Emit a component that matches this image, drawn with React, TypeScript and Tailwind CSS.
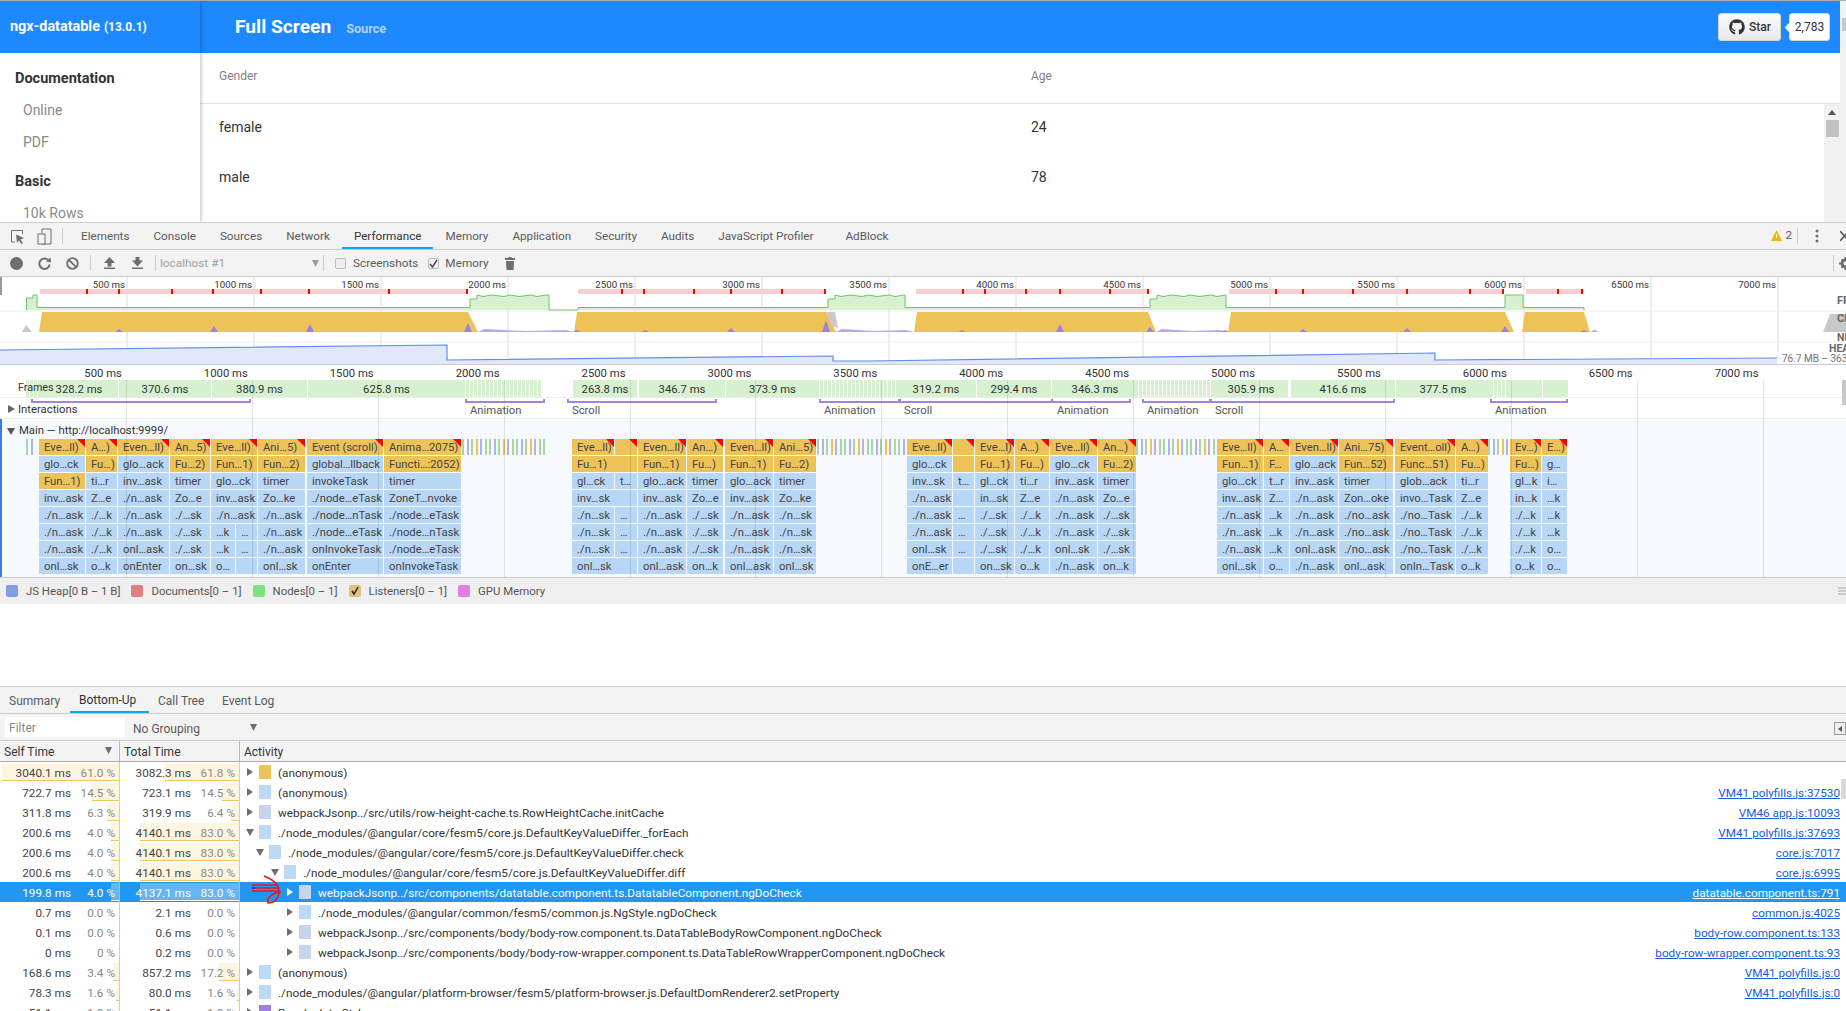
import { FaGithub } from 'react-icons/fa'

const TICKS = [1, 2, 3, 4, 5, 6, 7, 8, 9, 10, 11, 12, 13, 14]

const RED_SEGS = [[40, 468], [578, 825], [916, 1148], [1229, 1504], [1526, 1584]]
const RED_TICKS = [87, 119, 172, 213, 261, 309, 389, 467, 622, 644, 694, 731, 782, 825, 963, 985, 1026, 1060, 1110, 1148, 1276, 1303, 1353, 1407, 1470, 1503, 1558, 1582]
const CPU_SEGS = [[39, 468, 478], [574, 826, 836], [914, 1148, 1156], [1228, 1505, 1514], [1522, 1584, 1590]]
const SPIKES = [[119, 3], [214, 6], [310, 8], [468, 9], [577, 2], [645, 2], [731, 4], [826, 12], [962, 2], [1061, 2], [1060, 8], [1150, 5], [1225, 2], [1303, 3], [1407, 4], [1505, 6], [1584, 2]]
const NOISE = [[478, 574], [836, 914], [1156, 1228], [1590, 1600]]

// jagged top of the fps chart while the page is animating
function fpsTop(x1: number, x2: number) {
  let d = `L${x1} 299 L${x1 + 7} 299 L${x1 + 7} 295`
  let x = x1 + 7
  let i = 0
  while (x < x2 - 6) {
    x += 6 + (i % 3) * 3
    d += ` L${x} ${i % 2 ? 295 : 296.5}`
    i++
  }
  return d + ` L${x2} 295 L${x2} 307.5`
}

const fpsPath =
  'M26.5 310 L26.5 298 L33 298 L33 295 L37 295 L37 307.5 L470 307.5 ' +
  fpsTop(470, 549) + ' L549 310 L578 310 L578 307.5 L828 307.5 ' +
  fpsTop(828, 905) + ' L1150 307.5 ' +
  fpsTop(1150, 1226) + ' L1505 307.5 L1505 295 L1523 295 L1523 307.5 L1584 307.5 L1584 310'

function Overview() {
  return (
    <div className="h-[88px] overflow-hidden border-b border-[#ccc]">
      <svg className="block h-[87px] w-[1846px] font-[Roboto,sans-serif]" viewBox="0 0 1846 87">
        <g transform="translate(0,-277)">
          <rect x="0" y="277" width="2" height="18" fill="#999" />
          {TICKS.map((n) => (
            <g key={n}>
              <line x1={127 * n} x2={127 * n} y1="277" y2="365" stroke="#dcdcdc" />
              <text x={127 * n - 2} y="288" textAnchor="end" fontSize="9.7" fill="#333">{n * 500} ms</text>
            </g>
          ))}
          <line x1="0" x2="1846" y1="311" y2="311" stroke="#eee" />
          <line x1="0" x2="1846" y1="342" y2="342" stroke="#eee" />
          {RED_SEGS.map(([a, b]) => (
            <rect key={a} x={a} y="289" width={b - a} height="5" fill="#f8cfcf" />
          ))}
          {RED_TICKS.map((x) => (
            <rect key={x} x={x - 1} y="289" width="2" height="5" fill="#f00" />
          ))}
          <path d={fpsPath} fill="#d6f0d0" stroke="#6cc56a" strokeWidth="1" />
          <polygon points="22,332 26,325 32,332" fill="#c8c8c8" />
          {NOISE.map(([a, b]) => (
            <polygon key={a} points={`${a},332 ${a + 6},329 ${(a + b) / 2},331 ${b - 8},330 ${b},332`} fill="#b9a9e6" />
          ))}
          {CPU_SEGS.map(([a, b, c]) => (
            <polygon key={a} points={`${a},332 ${a + 3},312 ${b},312 ${c},332`} fill="#edc358" />
          ))}
          <polygon points="826,312 835,312 838,328 832,326" fill="#c9c9c9" />
          {SPIKES.map(([x, h]) => (
            <polygon key={`${x}-${h}`} points={`${x - 4},332 ${x},${332 - h} ${x + 4},332`} fill="#9b82e0" />
          ))}
          <polygon points="1823,332 1827,322 1830,314 1846,314 1846,332" fill="#c8c8c8" />
          <path d="M0 350 L447 345 L447 360 L833 356 L833 361 L870 361 L1435 353 L1435 360 L1777 358 L1846 358 L1846 365 L0 365 Z" fill="#e1e8fb" />
          <path d="M0 350 L447 345 L447 360 L833 356 L833 361 L870 361 L1435 353 L1435 360 L1777 358 L1846 358" fill="none" stroke="#5f8ee8" strokeWidth="1.2" />
          <rect x="1777" y="352" width="69" height="13" fill="#fff" fillOpacity="0.8" />
          <text x="1837" y="304" fontSize="11" fontWeight="700" fill="#666">FPS</text>
          <text x="1837" y="322" fontSize="11" fontWeight="700" fill="#666">CPU</text>
          <text x="1837" y="341" fontSize="10.5" fontWeight="700" fill="#666">NET</text>
          <text x="1829" y="352" fontSize="10.5" fontWeight="700" fill="#666">HEAP</text>
          <text x="1782" y="362" fontSize="10" fill="#777">76.7 MB – 363 M</text>
        </g>
      </svg>
    </div>
  )
}

const FRAMES: [number, number, string][] = [
  [40, 118, '328.2 ms'], [119, 211, '370.6 ms'], [212, 307, '380.9 ms'], [308, 465, '625.8 ms'],
  [573, 637, '263.8 ms'], [639, 725, '346.7 ms'], [726, 819, '373.9 ms'], [896, 976, '319.2 ms'],
  [977, 1051, '299.4 ms'], [1052, 1138, '346.3 ms'], [1214, 1288, '305.9 ms'], [1291, 1395, '416.6 ms'],
  [1396, 1490, '377.5 ms'], [1509, 1542, ''], [1543, 1568, ''],
]
const FRAME_STRIPES = [[26, 40], [466, 542], [820, 895], [1139, 1213], [1490, 1508]]

const BRACKETS: [number, number, string, number][] = [
  [31, 251, '', 0], [465, 545, 'Animation', 470], [567, 717, 'Scroll', 572], [819, 900, 'Animation', 824],
  [899, 1053, 'Scroll', 904], [1051, 1131, 'Animation', 1057], [1142, 1212, 'Animation', 1147],
  [1209, 1395, 'Scroll', 1215], [1490, 1568, 'Animation', 1495],
]

type Block = { x: number; w: number; row: number; label: string; yellow: boolean }

const flame: Block[] = []
function col(x1: number, x2: number, ys: number[], labels: (string | null)[]) {
  labels.forEach((label, row) => {
    if (label === null) return
    flame.push({ x: x1, w: x2 - x1, row, label, yellow: ys.includes(row) })
  })
}

const N = null
// first burst
col(39, 85, [0, 2], ['Eve…ll)', 'glo…ck', 'Fun…1)', 'inv…ask', './n…ask', './n…ask', './n…ask', 'onl…sk'])
col(86, 117, [0, 1], ['A…)', 'Fu…)', 'ti…r', 'Z…e', './…k', './…k', './…k', 'o…k'])
col(118, 169, [0], ['Even…ll)', 'glo…ack', 'inv…ask', './n…ask', './n…ask', './n…ask', 'onl…ask', 'onEnter'])
col(170, 210, [0, 1], ['An…5)', 'Fu…2)', 'timer', 'Zo…e', './…sk', './…sk', './…sk', 'on…sk'])
col(211, 257, [0, 1], ['Eve…ll)', 'Fun…1)', 'glo…ck', 'inv…ask', './n…ask', N, N, N])
col(211, 235, [], [N, N, N, N, N, '…k', '…k', 'o…'])
col(236, 257, [], [N, N, N, N, N, '…', '…', ''])
col(258, 305, [0, 1], ['Ani…5)', 'Fun…2)', 'timer', 'Zo…ke', './n…ask', './n…ask', './n…ask', 'onl…sk'])
col(307, 383, [0], ['Event (scroll)', 'global…llback', 'invokeTask', './node…eTask', './node…nTask', './node…eTask', 'onInvokeTask', 'onEnter'])
col(384, 461, [0, 1], ['Anima…2075)', 'Functi…:2052)', 'timer', 'ZoneT…nvoke', './node…eTask', './node…nTask', './node…eTask', 'onInvokeTask'])
// second burst
col(572, 614, [0], ['Eve…ll)', N, 'gl…ck', N, './n…sk', './n…sk', './n…sk', N])
col(615, 637, [0], ['', N, 't…', N, '…', '…', '…', N])
col(572, 637, [1], [N, 'Fu…1)', N, 'inv…sk', N, N, N, 'onl…sk'])
col(638, 686, [0, 1], ['Even…ll)', 'Fun…1)', 'glo…ack', 'inv…ask', './n…ask', './n…ask', './n…ask', 'onl…ask'])
col(687, 723, [0, 1], ['An…)', 'Fu…)', 'timer', 'Zo…e', './…sk', './…sk', './…sk', 'on…k'])
col(725, 773, [0, 1], ['Even…ll)', 'Fun…1)', 'glo…ack', 'inv…ask', './n…ask', './n…ask', './n…ask', 'onl…ask'])
col(774, 816, [0, 1], ['Ani…5)', 'Fu…2)', 'timer', 'Zo…ke', './n…sk', './n…sk', './n…sk', 'onl…sk'])
// third burst
col(907, 952, [0], ['Eve…ll)', 'glo…ck', 'inv…sk', './n…ask', './n…ask', './n…ask', 'onl…sk', 'onE…er'])
col(953, 974, [0, 1], ['', '', 't…', '', '…', '…', '…', ''])
col(975, 1014, [0, 1], ['Eve…l)', 'Fu…1)', 'gl…ck', 'in…sk', './…sk', './…sk', './…sk', 'on…sk'])
col(1015, 1049, [0, 1], ['A…)', 'Fu…)', 'ti…r', 'Z…e', './…k', './…k', './…k', 'o…k'])
col(1050, 1097, [0], ['Eve…ll)', 'glo…ck', 'inv…ask', './n…ask', './n…ask', './n…ask', 'onl…sk', './n…ask'])
col(1098, 1136, [0, 1], ['An…)', 'Fu…2)', 'timer', 'Zo…e', './…sk', './…sk', './…sk', 'on…k'])
// fourth burst
col(1217, 1263, [0, 1], ['Eve…ll)', 'Fun…1)', 'glo…ck', 'inv…ask', './n…ask', './n…ask', './n…ask', 'onl…sk'])
col(1264, 1289, [0, 1], ['A…', 'F…', 't…r', 'Z…', '…k', '…k', '…k', 'o…'])
col(1290, 1338, [0], ['Even…ll)', 'glo…ack', 'inv…ask', './n…ask', './n…ask', './n…ask', 'onl…ask', './n…ask'])
col(1339, 1393, [0, 1], ['Ani…75)', 'Fun…52)', 'timer', 'Zon…oke', './no…ask', './no…ask', './no…ask', 'onl…ask'])
col(1395, 1455, [0, 1], ['Event…oll)', 'Func…51)', 'glob…ack', 'invo…Task', './no…Task', './no…Task', './no…Task', 'onIn…Task'])
col(1456, 1488, [0, 1], ['A…)', 'Fu…)', 'ti…r', 'Z…e', './…k', './…k', './…k', 'o…k'])
col(1510, 1541, [0, 1], ['Ev…)', 'Fu…)', 'gl…k', 'in…k', './…k', './…k', './…k', 'o…k'])
col(1542, 1567, [0], ['E…)', 'g…', 'i…', '…k', '…k', '…k', 'o…', 'o…'])

const STRIPE_COLORS = ['#a9d6a4', '#b3b3e3', '#a9d6a4', '#edc358', '#b3b3e3', '#a9d6a4']
const STRIPE_RANGES = [[26, 34], [462, 545], [817, 905], [1136, 1215], [1488, 1508]]
const stripes: { x: number; c: string }[] = []
STRIPE_RANGES.forEach(([a, b]) => {
  let i = 0
  for (let x = a; x < b; x += 4 + (i % 2)) {
    stripes.push({ x, c: STRIPE_COLORS[i % STRIPE_COLORS.length] })
    i++
  }
})

function Timeline() {
  return (
    <div className="relative h-[212px] overflow-hidden bg-white text-[11.3px]">
      {/* ruler */}
      <div className="relative h-[15px] text-[#333]">
        {TICKS.map((n) => (
          <span key={n} className="absolute top-0 leading-[17px] whitespace-nowrap" style={{ right: 1846 - 125.9 * n + 4 }}>
            {n * 500} ms
          </span>
        ))}
      </div>

      {/* frames */}
      <div className="relative h-[17px]">
        {FRAME_STRIPES.flatMap(([a, b]) => {
          const out = []
          for (let x = a; x < b; x += 4) out.push(x)
          return out
        }).map((x) => (
          <div key={x} className="absolute top-0 h-[17px] w-[3px] bg-[#d6f0d0]" style={{ left: x }} />
        ))}
        {FRAMES.map(([a, b, label]) => (
          <div
            key={a}
            className="absolute top-0 h-[17px] bg-[#d6f0d0] text-center leading-[19px] text-[#333]"
            style={{ left: a, width: b - a }}
          >
            {label}
          </div>
        ))}
        <span className="absolute left-[18px] top-0 text-[10.7px] leading-[16px] text-[#333]">Frames</span>
      </div>

      {/* interactions */}
      <div className="relative h-[22px] border-y border-[#eee]">
        {BRACKETS.map(([a, b, label, lx]) => (
          <div key={a}>
            <div
              className="absolute top-[1px] h-[4px] border-x-2 border-b-2 border-[#9f84e3]"
              style={{ left: a, width: b - a }}
            />
            {label && (
              <span className="absolute top-[5px] leading-[15px] text-[#555]" style={{ left: lx }}>
                {label}
              </span>
            )}
          </div>
        ))}
        <svg className="absolute left-[8px] top-[7px] w-[7px] h-[8px]" viewBox="0 0 7 8">
          <path d="M0 0 L7 4 L0 8 Z" fill="#666" />
        </svg>
        <span className="absolute left-[18px] top-[4px] leading-[15px] text-[#333]">Interactions</span>
      </div>

      {/* main thread */}
      <div className="relative h-[158px] bg-[#f6f9fd] border-l-2 border-[#3b7bdc]">
        <div className="flex h-[20px] items-center gap-[4px] pl-[5px] pt-[4px] text-[#333]">
          <svg className="w-[8px] h-[7px]" viewBox="0 0 8 7">
            <path d="M0 0 L8 0 L4 7 Z" fill="#555" />
          </svg>
          <span>Main — http://localhost:9999/</span>
        </div>
        <div className="relative -ml-[2px] h-[138px]">
          {stripes.map((s) => (
            <div key={s.x} className="absolute top-0 h-[16px] w-[2px]" style={{ left: s.x, backgroundColor: s.c }} />
          ))}
          {flame.map((b, i) => (
            <div
              key={i}
              className={`absolute h-[16px] overflow-hidden whitespace-nowrap pl-[5px] leading-[17px] text-[#444] ${b.yellow ? 'bg-[#edc358]' : 'bg-[#b8d6f5]'}`}
              style={{ left: b.x, width: b.w, top: b.row * 17 }}
            >
              {b.label}
              {b.row === 0 && (
                <div className="absolute right-0 top-0 h-0 w-0 border-l-[8px] border-t-[8px] border-l-transparent border-t-[#f00]" />
              )}
            </div>
          ))}
        </div>
      </div>

      {/* grid lines over everything */}
      {TICKS.map((n) => (
        <div
          key={n}
          className="pointer-events-none absolute top-[15px] bottom-0 w-px bg-black/10"
          style={{ left: 125.9 * n }}
        />
      ))}
      <div className="absolute right-0 top-[15px] h-[25px] w-[4px] bg-[#c8c8c8]" />
    </div>
  )
}

const LEGEND: [string, string, boolean][] = [
  ['JS Heap[0 B – 1 B]', 'bg-[#7f9fe0]', false],
  ['Documents[0 – 1]', 'bg-[#e07f7f]', false],
  ['Nodes[0 – 1]', 'bg-[#7fe07f]', false],
  ['Listeners[0 – 1]', 'bg-[#e0bf7f]', true],
  ['GPU Memory', 'bg-[#df7fdf]', false],
]

type Row = {
  self: string
  selfPct: string
  selfW: number
  total: string
  totalPct: string
  totalW: number
  depth: number
  open?: boolean
  selected?: boolean
  icon: string
  name: string
  link?: string
}

const YELLOW = 'bg-[#edc358]'
const BLUE = 'bg-[#bcd9f5]'
const LAV = 'bg-[#c8d4ec]'

const ROWS: Row[] = [
  { self: '3040.1 ms', selfPct: '61.0 %', selfW: 117, total: '3082.3 ms', totalPct: '61.8 %', totalW: 74, depth: 0, icon: YELLOW, name: '(anonymous)' },
  { self: '722.7 ms', selfPct: '14.5 %', selfW: 27, total: '723.1 ms', totalPct: '14.5 %', totalW: 17, depth: 0, icon: BLUE, name: '(anonymous)', link: 'VM41 polyfills.js:37530' },
  { self: '311.8 ms', selfPct: '6.3 %', selfW: 12, total: '319.9 ms', totalPct: '6.4 %', totalW: 8, depth: 0, icon: LAV, name: 'webpackJsonp../src/utils/row-height-cache.ts.RowHeightCache.initCache', link: 'VM46 app.js:10093' },
  { self: '200.6 ms', selfPct: '4.0 %', selfW: 8, total: '4140.1 ms', totalPct: '83.0 %', totalW: 99, depth: 0, open: true, icon: BLUE, name: './node_modules/@angular/core/fesm5/core.js.DefaultKeyValueDiffer._forEach', link: 'VM41 polyfills.js:37693' },
  { self: '200.6 ms', selfPct: '4.0 %', selfW: 8, total: '4140.1 ms', totalPct: '83.0 %', totalW: 99, depth: 1, open: true, icon: BLUE, name: './node_modules/@angular/core/fesm5/core.js.DefaultKeyValueDiffer.check', link: 'core.js:7017' },
  { self: '200.6 ms', selfPct: '4.0 %', selfW: 8, total: '4140.1 ms', totalPct: '83.0 %', totalW: 99, depth: 2, open: true, icon: BLUE, name: './node_modules/@angular/core/fesm5/core.js.DefaultKeyValueDiffer.diff', link: 'core.js:6995' },
  { self: '199.8 ms', selfPct: '4.0 %', selfW: 8, total: '4137.1 ms', totalPct: '83.0 %', totalW: 99, depth: 3, selected: true, icon: LAV, name: 'webpackJsonp../src/components/datatable.component.ts.DatatableComponent.ngDoCheck', link: 'datatable.component.ts:791' },
  { self: '0.7 ms', selfPct: '0.0 %', selfW: 0, total: '2.1 ms', totalPct: '0.0 %', totalW: 0, depth: 3, icon: BLUE, name: './node_modules/@angular/common/fesm5/common.js.NgStyle.ngDoCheck', link: 'common.js:4025' },
  { self: '0.1 ms', selfPct: '0.0 %', selfW: 0, total: '0.6 ms', totalPct: '0.0 %', totalW: 0, depth: 3, icon: LAV, name: 'webpackJsonp../src/components/body/body-row.component.ts.DataTableBodyRowComponent.ngDoCheck', link: 'body-row.component.ts:133' },
  { self: '0 ms', selfPct: '0 %', selfW: 0, total: '0.2 ms', totalPct: '0.0 %', totalW: 0, depth: 3, icon: LAV, name: 'webpackJsonp../src/components/body/body-row-wrapper.component.ts.DataTableRowWrapperComponent.ngDoCheck', link: 'body-row-wrapper.component.ts:93' },
  { self: '168.6 ms', selfPct: '3.4 %', selfW: 6, total: '857.2 ms', totalPct: '17.2 %', totalW: 20, depth: 0, icon: BLUE, name: '(anonymous)', link: 'VM41 polyfills.js:0' },
  { self: '78.3 ms', selfPct: '1.6 %', selfW: 3, total: '80.0 ms', totalPct: '1.6 %', totalW: 2, depth: 0, icon: BLUE, name: './node_modules/@angular/platform-browser/fesm5/platform-browser.js.DefaultDomRenderer2.setProperty', link: 'VM41 polyfills.js:0' },
  { self: '51.1 ms', selfPct: '1.0 %', selfW: 2, total: '51.1 ms', totalPct: '1.0 %', totalW: 1, depth: 0, icon: 'bg-[#9b82e0]', name: 'Recalculate Style' },
]

const DEPTH_PAD = ['pl-[6px]', 'pl-[16px]', 'pl-[31px]', 'pl-[46px]']

function TimeCell({ time, pct, width, selected, border }: { time: string; pct: string; width: number; selected?: boolean; border: string }) {
  return (
    <div className={`relative h-full w-[120px] shrink-0 border-r ${border}`}>
      {width > 0 && (
        <div
          className={`absolute right-0 top-px bottom-px border-b ${selected ? 'bg-white/30 border-white' : 'bg-[#fdf5df] border-[#efc75e]'}`}
          style={{ width }}
        />
      )}
      <span className={`absolute right-[48px] top-0 leading-[23px] ${selected ? 'text-white' : 'text-[#444]'}`}>{time}</span>
      <span className={`absolute right-[4px] top-0 leading-[23px] ${selected ? 'text-white' : 'text-[#888]'}`}>{pct}</span>
    </div>
  )
}

function ProfileRow({ row }: { row: Row }) {
  const sel = row.selected
  return (
    <div className={`flex h-[20px] items-stretch whitespace-nowrap text-[11.75px] ${sel ? 'bg-[#2196f3]' : ''}`}>
      <TimeCell time={row.self} pct={row.selfPct} width={row.selfW} selected={sel} border={sel ? 'border-[#8ec8f8]' : 'border-[#ccc]'} />
      <TimeCell time={row.total} pct={row.totalPct} width={row.totalW} selected={sel} border={sel ? 'border-[#8ec8f8]' : 'border-[#ccc]'} />
      <div className={`flex min-w-0 flex-1 items-center pr-[6px] ${DEPTH_PAD[row.depth]}`}>
        {row.open ? (
          <svg className="mr-[5px] w-[8px] h-[8px] shrink-0" viewBox="0 0 8 8">
            <path d="M0 1 L8 1 L4 8 Z" fill="#6e6e6e" />
          </svg>
        ) : (
          <svg className="mr-[5px] w-[8px] h-[8px] shrink-0" viewBox="0 0 8 8">
            <path d="M1 0 L7 4 L1 8 Z" fill={sel ? '#fff' : '#6e6e6e'} />
          </svg>
        )}
        <span className={`h-[14px] w-[12px] shrink-0 ${row.icon}`} />
        <span className={`ml-[7px] flex-1 overflow-hidden pt-[3px] ${sel ? 'text-white' : 'text-[#333]'}`}>{row.name}</span>
        {row.link && <span className={`pt-[3px] underline ${sel ? 'text-white' : 'text-[#1a5bdb]'}`}>{row.link}</span>}
      </div>
    </div>
  )
}

const MAIN_TABS = ['Elements', 'Console', 'Sources', 'Network', 'Performance', 'Memory', 'Application', 'Security', 'Audits', 'JavaScript Profiler']

export default function App() {
  return (
    <div className="relative h-[1011px] w-[1846px] overflow-hidden bg-white font-[Roboto,sans-serif] text-[12px] text-[#333]">
      {/* demo page */}
      <div className="flex h-[222px] overflow-hidden border-t border-[#aaa]">
        <aside className="z-10 w-[200px] shrink-0 bg-white shadow-[1px_0_4px_rgba(0,0,0,0.25)]">
          <div className="flex h-[52px] items-center bg-[#1e88ff] pl-[10px] font-bold text-white">
            <span className="text-[14.4px]">ngx-datatable</span>
            <span className="ml-[4px] text-[12px]">(13.0.1)</span>
          </div>
          <div className="pl-[15px] pt-[16px]">
            <h4 className="text-[14.5px] font-bold leading-[20px] text-[#333]">Documentation</h4>
            <p className="mt-[11px] pl-[8px] text-[14px] leading-[20px] text-[#8a8a8a]">Online</p>
            <p className="mt-[12px] pl-[8px] text-[14px] leading-[20px] text-[#8a8a8a]">PDF</p>
            <h4 className="mt-[20px] text-[14.5px] font-bold leading-[20px] text-[#333]">Basic</h4>
            <p className="mt-[11px] pl-[8px] text-[14px] leading-[20px] text-[#8a8a8a]">10k Rows</p>
          </div>
        </aside>
        <main className="flex min-w-0 flex-1 flex-col">
          <header className="flex h-[52px] items-center bg-[#1e88ff] pl-[35px] pr-[10px]">
            <h1 className="text-[19.2px] font-bold text-white">Full Screen</h1>
            <span className="ml-[15px] mt-[3px] text-[12.7px] font-bold text-[#b4d4f5]">Source</span>
            <div className="ml-auto flex items-center">
              <div className="flex h-[28px] w-[63px] items-center gap-[4px] rounded-[3px] border border-[#d5d5d5] bg-gradient-to-b from-[#fcfcfc] to-[#e6e8ea] pl-[10px] text-[12px] font-medium text-[#333]">
                <FaGithub className="h-[16px] w-[16px]" />
                Star
              </div>
              <div className="relative ml-[8px] flex h-[28px] w-[41px] items-center justify-center rounded-[3px] border border-[#d5d5d5] bg-white text-[12px] text-[#333]">
                <span className="absolute -left-[4px] top-[10px] h-[7px] w-[7px] rotate-45 bg-white" />
                2,783
              </div>
            </div>
          </header>
          <div className="flex h-[51px] shrink-0 border-b border-[#e3e3e3] text-[12px] text-[#808080]">
            <div className="w-[831px] pl-[19px] pt-[14px]">Gender</div>
            <div className="pt-[14px]">Age</div>
          </div>
          <div className="-mt-[2px] flex min-h-0 flex-1">
            <div className="flex-1 text-[14px] text-[#333]">
              <div className="flex h-[50px] items-center">
                <div className="w-[831px] pl-[19px]">female</div>
                <div>24</div>
              </div>
              <div className="flex h-[50px] items-center">
                <div className="w-[831px] pl-[19px]">male</div>
                <div>78</div>
              </div>
            </div>
            <div className="mt-[2px] flex w-[16px] flex-col items-center bg-[#f1f1f1] pt-[6px]">
              <svg className="w-[8px] h-[5px]" viewBox="0 0 8 5">
                <path d="M0 5 L4 0 L8 5 Z" fill="#505050" />
              </svg>
              <div className="mt-[5px] h-[17px] w-[13px] bg-[#c1c1c1]" />
            </div>
          </div>
        </main>
        <div className="w-[6px] shrink-0 bg-[#f1f1f1] pt-[17px]">
          <div className="ml-[2px] h-[13px] w-[4px] bg-[#c8c8c8]" />
        </div>
      </div>

      {/* devtools tabs */}
      <div className="flex h-[28px] items-center border-y border-[#ccc] bg-[#f3f3f3] pl-[10px] text-[11.7px] text-[#5a5a5a]">
        <svg className="w-[15px] h-[15px] shrink-0" viewBox="0 0 15 15">
          <path d="M5 13 H1.5 V1.5 H12.5 V5" fill="none" stroke="#6e6e6e" strokeWidth="1" />
          <path d="M6 5.5 L14 9 L10.5 10.5 L13 14 L11.5 15 L9 11.5 L7 14 Z" fill="#6e6e6e" />
        </svg>
        <svg className="ml-[12px] w-[15px] h-[17px] shrink-0" viewBox="0 0 15 17">
          <path d="M5 5 V1 H14 V16 H5" fill="none" stroke="#6e6e6e" />
          <rect x="1" y="6" width="7" height="10" fill="#f3f3f3" stroke="#6e6e6e" />
        </svg>
        <div className="ml-[10px] h-[16px] w-px bg-[#ccc]" />
        <nav className="ml-[6px] flex h-full items-stretch">
          {MAIN_TABS.map((t) => (
            <span
              key={t}
              className={`flex items-center border-b-2 px-[12px] pt-[3px] ${t === 'Performance' ? 'border-[#03a9f4] text-[#333]' : 'border-transparent'}`}
            >
              {t}
            </span>
          ))}
          <span className="ml-[8px] flex items-center border-b-2 border-transparent px-[12px] pt-[3px]">AdBlock</span>
        </nav>
        <div className="ml-auto flex items-center">
          <svg className="w-[11px] h-[11px]" viewBox="0 0 11 11">
            <path d="M5.5 0 L11 11 H0 Z" fill="#f4b400" />
            <rect x="5" y="4" width="1" height="4" fill="#fff" />
          </svg>
          <span className="ml-[3px]">2</span>
          <div className="ml-[5px] h-[16px] w-px bg-[#ccc]" />
          <svg className="ml-[17px] w-[4px] h-[14px]" viewBox="0 0 4 14">
            <circle cx="2" cy="2" r="1.5" fill="#6e6e6e" />
            <circle cx="2" cy="7" r="1.5" fill="#6e6e6e" />
            <circle cx="2" cy="12" r="1.5" fill="#6e6e6e" />
          </svg>
          <svg className="ml-[21px] w-[9px] h-[10px] mr-[-3px]" viewBox="0 0 9 10">
            <path d="M0 0 L9 10 M9 0 L0 10" stroke="#555" strokeWidth="1.6" />
          </svg>
        </div>
      </div>

      {/* performance toolbar */}
      <div className="flex h-[27px] items-center border-b border-[#ccc] bg-[#f3f3f3] pl-[10px] text-[11.8px] text-[#5a5a5a]">
        <div className="h-[13px] w-[13px] rounded-full bg-[#6e6e6e]" />
        <svg className="ml-[15px] w-[13px] h-[13px]" viewBox="0 0 13 13">
          <path d="M11 4 A5.2 5.2 0 1 0 11.7 7.5" fill="none" stroke="#6e6e6e" strokeWidth="2" />
          <path d="M8 4.5 L13 5.5 L12.5 0.5 Z" fill="#6e6e6e" />
        </svg>
        <svg className="ml-[15px] w-[13px] h-[13px]" viewBox="0 0 13 13">
          <circle cx="6.5" cy="6.5" r="5.3" fill="none" stroke="#6e6e6e" strokeWidth="1.8" />
          <path d="M2.8 2.8 L10.2 10.2" stroke="#6e6e6e" strokeWidth="1.8" />
        </svg>
        <div className="ml-[11px] h-[16px] w-px bg-[#ccc]" />
        <svg className="ml-[13px] w-[11px] h-[12px]" viewBox="0 0 11 12">
          <path d="M5.5 0 L11 6 H7.5 V9.5 H3.5 V6 H0 Z M0 10.5 H11 V12 H0 Z" fill="#6e6e6e" />
        </svg>
        <svg className="ml-[17px] w-[11px] h-[12px]" viewBox="0 0 11 12">
          <path d="M5.5 9.5 L11 3.5 H7.5 V0 H3.5 V3.5 H0 Z M0 10.5 H11 V12 H0 Z" fill="#6e6e6e" />
        </svg>
        <div className="ml-[12px] h-[16px] w-px bg-[#ccc]" />
        <div className="flex w-[167px] items-center justify-between pl-[4px] pr-[4px] pt-[1px] text-[#a0a0a0]">
          <span>localhost #1</span>
          <svg className="w-[7px] h-[7px]" viewBox="0 0 7 7">
            <path d="M0 0 H7 L3.5 7 Z" fill="#999" />
          </svg>
        </div>
        <div className="h-[16px] w-px bg-[#ccc]" />
        <span className="ml-[11px] h-[11px] w-[11px] rounded-[2px] border border-[#bbb] bg-[#eee]" />
        <span className="ml-[7px] pt-[2px]">Screenshots</span>
        <span className="ml-[10px] flex h-[11px] w-[11px] items-center justify-center rounded-[2px] border border-[#bbb] bg-[#eee]">
          <svg className="w-[9px] h-[9px]" viewBox="0 0 9 9">
            <path d="M1 5 L3.5 8 L8 1" fill="none" stroke="#444" strokeWidth="1.4" />
          </svg>
        </span>
        <span className="ml-[6px] pt-[2px]">Memory</span>
        <svg className="ml-[16px] w-[10px] h-[13px]" viewBox="0 0 10 13">
          <path d="M3.5 0 H6.5 V1 H10 V3 H0 V1 H3.5 Z M1 4 H9 L8.5 13 H1.5 Z" fill="#6e6e6e" />
        </svg>
        <div className="ml-auto mr-[5px] h-[16px] w-px bg-[#ccc]" />
        <svg className="mr-[-6px] w-[13px] h-[13px]" viewBox="0 0 13 13">
          <circle cx="6.5" cy="6.5" r="3.6" fill="none" stroke="#6e6e6e" strokeWidth="2.6" />
          <path d="M5.5 0 H7.5 V13 H5.5 Z M0 5.5 H13 V7.5 H0 Z M1.8 3.2 L3.2 1.8 L11.2 9.8 L9.8 11.2 Z M9.8 1.8 L11.2 3.2 L3.2 11.2 L1.8 9.8 Z" fill="#6e6e6e" />
          <circle cx="6.5" cy="6.5" r="2" fill="#f3f3f3" />
        </svg>
      </div>

      <Overview />
      <Timeline />

      {/* memory legend */}
      <div className="relative flex h-[27px] items-center border-t border-[#ccc] bg-[#efefef] pl-[6px] text-[11.4px] text-[#555]">
        {LEGEND.map(([label, color, checked]) => (
          <div key={label} className="mr-[11px] flex items-center gap-[8px]">
            <span className={`flex h-[12px] w-[12px] items-center justify-center rounded-[2px] ${color}`}>
              {checked && (
                <svg className="w-[10px] h-[10px]" viewBox="0 0 10 10">
                  <path d="M2 5 L4 8 L8 1" fill="none" stroke="#222" strokeWidth="1.5" />
                </svg>
              )}
            </span>
            <span className="pt-[2px]">{label}</span>
          </div>
        ))}
        <svg className="absolute right-0 top-[9px] w-[8px] h-[8px]" viewBox="0 0 8 8">
          <path d="M0 1 H8 M0 4 H8 M0 7 H8" stroke="#aaa" />
        </svg>
      </div>

      <div className="h-[82px] bg-white" />

      {/* bottom-up panel */}
      <div className="flex h-[28px] items-stretch border-y border-[#ccc] bg-[#f3f3f3] text-[12px] text-[#5a5a5a]">
        <span className="flex w-[70px] items-center pl-[9px] pt-[2px]">Summary</span>
        <span className="flex w-[79px] items-center border-b-2 border-[#03a9f4] pl-[9px] pt-[2px] text-[#333]">Bottom-Up</span>
        <span className="flex w-[73px] items-center pl-[9px] pt-[2px]">Call Tree</span>
        <span className="flex items-center pt-[2px]">Event Log</span>
      </div>
      <div className="relative flex h-[27px] items-center border-b border-[#ccc] bg-[#f3f3f3] pl-[5px] text-[12px] text-[#5a5a5a]">
        <div className="h-[20px] w-[120px] bg-white pl-[4px] leading-[23px] text-[#888]">Filter</div>
        <span className="ml-[8px] pt-[3px]">No Grouping</span>
        <svg className="absolute left-[250px] top-[10px] w-[7px] h-[7px]" viewBox="0 0 7 7">
          <path d="M0 0 H7 L3.5 7 Z" fill="#6e6e6e" />
        </svg>
        <div className="absolute right-0 top-[8px] flex h-[13px] w-[12px] items-center justify-center border border-[#999] bg-[#eee]">
          <svg className="w-[4px] h-[6px]" viewBox="0 0 4 6">
            <path d="M4 0 V6 L0 3 Z" fill="#555" />
          </svg>
        </div>
      </div>
      <div className="flex h-[21px] border-b border-[#aaa] bg-[#f3f3f3] text-[12px] leading-[23px] text-[#333]">
        <div className="relative w-[120px] border-r border-[#bbb] pl-[4px]">
          Self Time
          <svg className="absolute right-[7px] top-[6px] w-[7px] h-[7px]" viewBox="0 0 7 7">
            <path d="M0 0 H7 L3.5 7 Z" fill="#6e6e6e" />
          </svg>
        </div>
        <div className="w-[120px] border-r border-[#bbb] pl-[4px]">Total Time</div>
        <div className="pl-[4px]">Activity</div>
      </div>
      <div className="relative">
        {ROWS.map((r, i) => (
          <ProfileRow key={i} row={r} />
        ))}
        {/* hand drawn marker on the selected row */}
        <svg className="absolute left-[250px] top-[112px] w-[34px] h-[32px]" viewBox="0 0 34 32">
          <path d="M2 11 H28 M2 14 H28 M2 17 H28" stroke="#f01414" strokeWidth="1.6" fill="none" />
          <path d="M14 2 C21 5 29 9 29 17 C29 25 24 29 18 29 C16 25 21 19 31 18" stroke="#f01414" strokeWidth="1.6" fill="none" />
          <path d="M2 14 H5" stroke="#2030e0" strokeWidth="1.6" />
        </svg>
        <div className="absolute right-0 top-[17px] h-[20px] w-[5px] bg-[#d8d8d8]" />
      </div>
    </div>
  )
}
